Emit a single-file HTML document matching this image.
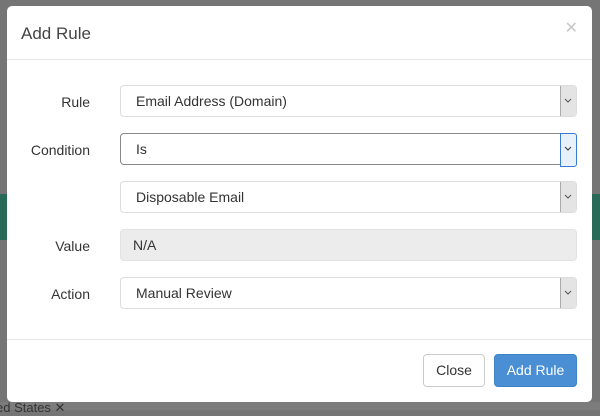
<!DOCTYPE html>
<html><head><style>
body{margin:0;width:600px;height:410px;background:#757575;position:relative;overflow:hidden;font-family:"Liberation Sans","DejaVu Sans",sans-serif;}
.green{position:absolute;left:0;width:600px;top:194px;height:46px;background:#2a6a58;}
.bot{position:absolute;left:0;top:402px;width:600px;height:8px;background:#7c7c7c;}
.bot span{position:absolute;left:-4px;top:-2px;font-size:13px;color:#333;}
.modal{position:absolute;left:7px;top:6px;width:585px;height:396px;background:#fff;border-radius:5px;}
.hdr{height:53px;border-bottom:1px solid #e5e5e5;}
.hdr h4{margin:0;position:absolute;left:14px;top:18px;font-size:17px;font-weight:normal;color:#444;}
.x{position:absolute;right:14px;top:12px;font-size:16px;color:#c8c8c8;}
.lbl{position:absolute;width:83px;text-align:right;font-size:14px;color:#333;}
.sel{position:absolute;left:113px;width:457px;height:32px;border:1px solid #ddd;border-radius:4px;font-size:14px;color:#333;box-sizing:border-box;}
.sel span{position:absolute;left:15px;top:7px;}
.dd{position:absolute;right:0;top:0;width:15px;height:30px;background:#e4e4e4;border-left:1px solid #aaa;border-radius:0 3px 3px 0;}
.dd svg{position:absolute;left:3px;top:12px;}
.foot{position:absolute;left:0;top:333px;width:585px;border-top:1px solid #e5e5e5;}
.btn{position:absolute;top:348px;height:33px;box-sizing:border-box;border-radius:4px;font-size:14px;text-align:center;line-height:31px;}
</style></head><body>
<div class="green"></div>
<div class="bot"><span>ed States ✕</span></div>
<div class="modal">
<div class="hdr"><h4>Add Rule</h4><div class="x">✕</div></div>
<div class="lbl" style="top:88px">Rule</div>
<div class="sel" style="top:79px"><span>Email Address (Domain)</span><div class="dd"><svg width="8" height="6"><path d="M1 1L4 4L7 1" stroke="#555" fill="none"/></svg></div></div>
<div class="lbl" style="top:136px">Condition</div>
<div class="sel" style="top:127px;border-color:#888"><span>Is</span><div class="dd" style="background:#e8f1fa;border:1px solid #3a7bd5;top:-1px;right:-1px;height:32px"><svg width="8" height="6"><path d="M1 1L4 4L7 1" stroke="#333" fill="none"/></svg></div></div>
<div class="sel" style="top:175px"><span>Disposable Email</span><div class="dd"><svg width="8" height="6"><path d="M1 1L4 4L7 1" stroke="#555" fill="none"/></svg></div></div>
<div class="lbl" style="top:232px">Value</div>
<div class="sel" style="top:223px;background:#ececec;border-color:#e2e2e2"><span style="left:12px">N/A</span></div>
<div class="lbl" style="top:280px">Action</div>
<div class="sel" style="top:271px"><span>Manual Review</span><div class="dd"><svg width="8" height="6"><path d="M1 1L4 4L7 1" stroke="#555" fill="none"/></svg></div></div>
<div class="foot"></div>
<div class="btn" style="left:416px;width:62px;border:1px solid #ccc;color:#333">Close</div>
<div class="btn" style="left:487px;width:83px;background:#4a8fd3;color:#fff;border:1px solid #3f83c6">Add Rule</div>
</div>
</body></html>
